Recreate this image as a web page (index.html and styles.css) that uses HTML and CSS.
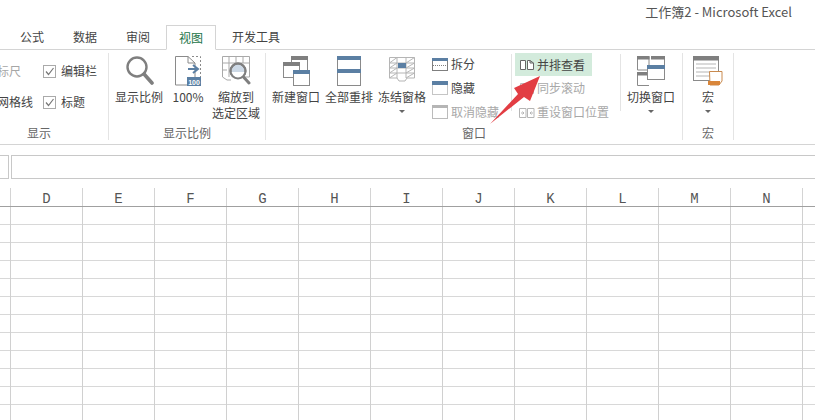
FILE: index.html
```html
<!DOCTYPE html>
<html lang="zh-CN">
<head>
  <meta charset="UTF-8" />
  <title>工作簿2 - Microsoft Excel</title>
  <link rel="stylesheet" href="styles.css">
</head>
<body>
  <div class="titlebar">工作簿2 - Microsoft Excel</div>

  <div class="tabs">
    <div class="tab">公式</div>
    <div class="tab">数据</div>
    <div class="tab">审阅</div>
    <div class="tab active">视图</div>
    <div class="tab">开发工具</div>
  </div>

  <div class="ribbon">
    <!-- 显示 -->
    <div class="group group-show">
      <div class="group-body checks">
        <div class="check-row muted">标尺</div>
        <div class="check-row"><span class="checkbox"><svg width="11" height="11" viewBox="0 0 11 11"><path d="M2 5.5 4.500 8.500 9.500 2" fill="none" stroke="#777" stroke-width="1.2"/></svg></span>编辑栏</div>
        <div class="check-row">网格线</div>
        <div class="check-row"><span class="checkbox"><svg width="11" height="11" viewBox="0 0 11 11"><path d="M2 5.5 4.500 8.500 9.500 2" fill="none" stroke="#777" stroke-width="1.2"/></svg></span>标题</div>
      </div>
      <div class="group-label">显示</div>
    </div>
    <div class="sep"></div>

    <!-- 显示比例 -->
    <div class="group group-zoom">
      <div class="group-body">
        <div class="big-btn">
          <svg class="big-icon" width="30" height="32" viewBox="0 0 30 32">
            <circle cx="13" cy="12" r="9.500" fill="#fff" stroke="#7f7f7f" stroke-width="2.400"/>
            <path d="M20 19 28 28" stroke="#7f7f7f" stroke-width="3.600" stroke-linecap="round"/>
          </svg>
          <span>显示比例</span>
        </div>
        <div class="big-btn btn-100">
          <svg class="big-icon" width="28" height="32" viewBox="0 0 28 32">
            <path d="M1.500 1.500H14L21 8V30H1.500Z" fill="#fff" stroke="#8a8a8a"/>
            <path d="M14 1.500V8H21" fill="none" stroke="#8a8a8a"/>
            <path d="M18 1.500H26.500V22" fill="none" stroke="#8a8a8a" stroke-dasharray="2 2"/>
            <path d="M14 14H23M19 10 24 14 19 18" fill="none" stroke="#5b7fa3" stroke-width="2"/>
            <rect x="13" y="22" width="14" height="9" fill="#5b7fa3"/>
            <text x="20" y="29.500" class="icon-text">100</text>
          </svg>
          <span>100%</span>
        </div>
        <div class="big-btn">
          <svg class="big-icon" width="30" height="32" viewBox="0 0 30 32">
            <path d="M1.500 1.500H28.500V22H24M1.500 1.500V22L6 25H10M1.500 8H28.500M8 1.500V22M15 1.500V8M22 1.500V8M1.500 15H6" fill="none" stroke="#a9a9a9"/>
            <circle cx="17" cy="16" r="7.500" fill="#cdd9e6" stroke="#7f7f7f" stroke-width="2"/>
            <path d="M10 17H24V19A7 7 0 0 1 10 19Z" fill="#fff"/>
            <circle cx="17" cy="16" r="7.500" fill="none" stroke="#7f7f7f" stroke-width="2"/>
            <path d="M22.500 22 28 28" stroke="#7f7f7f" stroke-width="3" stroke-linecap="round"/>
          </svg>
          <span>缩放到<br>选定区域</span>
        </div>
      </div>
      <div class="group-label">显示比例</div>
    </div>
    <div class="sep"></div>

    <!-- 窗口 -->
    <div class="group group-window">
      <div class="group-body">
        <div class="big-btn">
          <svg class="big-icon" width="28" height="32" viewBox="0 0 28 32">
            <rect x="9.500" y="1.500" width="16" height="15" fill="#fff" stroke="#8a8a8a"/>
            <rect x="9" y="1" width="17" height="4" fill="#7f7f7f"/>
            <rect x="1.500" y="7.500" width="16" height="15" fill="#fff" stroke="#8a8a8a"/>
            <rect x="1" y="7" width="17" height="4" fill="#7f7f7f"/>
            <rect x="11.500" y="15.500" width="16" height="15" fill="#fff" stroke="#8a8a8a"/>
            <rect x="11" y="15" width="17" height="4" fill="#5b7fa3"/>
          </svg>
          <span>新建窗口</span>
        </div>
        <div class="big-btn">
          <svg class="big-icon" width="26" height="32" viewBox="0 0 26 32">
            <rect x="1.500" y="1.500" width="23" height="29" fill="#fff" stroke="#8a8a8a"/>
            <rect x="1" y="1" width="24" height="4" fill="#5b7fa3"/>
            <rect x="1" y="14" width="24" height="4" fill="#5b7fa3"/>
          </svg>
          <span>全部重排</span>
        </div>
        <div class="big-btn">
          <svg class="big-icon" width="28" height="32" viewBox="0 0 28 32">
            <path d="M1.500 2.500H26.500V23H19L17 26H11L9 23H1.500ZM1.500 8H26.500M1.500 13H26.500M1.500 18H26.500M9 2.500V23M18 2.500V23M1.500 8 9 2.500M1.500 13 9 8M1.500 18 9 13M1.500 23 9 18M18 8 26.500 2.500M18 13 26.500 8M18 18 26.500 13M18 23 26.500 18" fill="#fff" stroke="#b5b5b5"/>
            <rect x="10" y="8" width="8" height="5" fill="#5b7fa3"/>
          </svg>
          <span>冻结窗格</span>
          <i class="caret"></i>
        </div>

        <div class="small-col">
          <div class="small-row">
            <svg width="16" height="13" viewBox="0 0 16 13"><rect x=".5" y=".5" width="15" height="12" fill="#fff" stroke="#7f7f7f"/><rect width="16" height="3" fill="#5b7fa3"/><path d="M1 7.500H15" stroke="#7f7f7f" stroke-dasharray="1 1"/></svg>
            <span>拆分</span>
          </div>
          <div class="small-row">
            <svg width="16" height="14" viewBox="0 0 16 14"><rect x=".5" y=".5" width="15" height="13" fill="#fff" stroke="#8a8a8a" stroke-dasharray="1 1"/><rect width="16" height="4" fill="#5b7fa3"/></svg>
            <span>隐藏</span>
          </div>
          <div class="small-row off">
            <svg width="16" height="14" viewBox="0 0 16 14"><rect x=".5" y=".5" width="15" height="13" fill="#fff" stroke="#bbb"/><rect width="16" height="3" fill="#b5b5b5"/></svg>
            <span>取消隐藏</span>
          </div>
        </div>
        <div class="sep inner"></div>

        <div class="small-col side">
          <div class="small-row on">
            <svg width="16" height="13" viewBox="0 0 16 13"><path d="M1.500 2.500H6.500V11.500H1.500ZM8.500 2.500H11L14.500 5V11.500H8.500ZM11 2.500V5H14.500" fill="#fff" stroke="#666"/></svg>
            <span>并排查看</span>
          </div>
          <div class="small-row off">
            <svg width="16" height="13" viewBox="0 0 16 13"><path d="M1.500 1.500H7V9.500H1.500ZM9 3.500H14.500V11.500H9Z" fill="#fff" stroke="#bbb"/></svg>
            <span>同步滚动</span>
          </div>
          <div class="small-row off">
            <svg width="16" height="13" viewBox="0 0 16 13"><path d="M.5 2.500H7V11.500H.5ZM8.500 2.500H15V11.500H8.500ZM2 7H5M3.500 5.500 5 7 3.500 8.500M14 7H11M12.500 5.500 11 7 12.500 8.500" fill="#fff" stroke="#b5b5b5"/></svg>
            <span>重设窗口位置</span>
          </div>
        </div>
        <div class="sep inner"></div>

        <div class="big-btn btn-switch">
          <svg class="big-icon" width="30" height="32" viewBox="0 0 30 32">
            <path d="M1.500 1.500H13V15H1.500ZM15.500 1.500H28.500V12M1.500 17.500H13M1.500 17.500V30.500H13" fill="#fff" stroke="#8a8a8a"/>
            <rect x="1" y="1" width="12.500" height="3.500" fill="#7f7f7f"/>
            <rect x="15" y="1" width="14" height="3.500" fill="#7f7f7f"/>
            <rect x="1" y="17" width="10" height="3.500" fill="#7f7f7f"/>
            <rect x="11.500" y="10.500" width="17" height="14" fill="#fff" stroke="#8a8a8a"/>
            <rect x="11" y="10" width="18" height="4" fill="#5b7fa3"/>
          </svg>
          <span>切换窗口</span>
          <i class="caret"></i>
        </div>
      </div>
      <div class="group-label">窗口</div>
    </div>
    <div class="sep"></div>

    <!-- 宏 -->
    <div class="group group-macro">
      <div class="group-body">
        <div class="big-btn">
          <svg class="big-icon" width="32" height="32" viewBox="0 0 32 32">
            <rect x="1.500" y="1.500" width="25" height="24" fill="#fff" stroke="#8a8a8a"/>
            <rect x="1" y="1" width="26" height="4.500" fill="#7f7f7f"/>
            <path d="M4 9H24M4 13H24M4 17H24M4 21H18" stroke="#b5b5b5"/>
            <path d="M17.500 16.500H30V26L27 30H18Z" fill="#fff" stroke="#c98a4e"/>
            <rect x="16" y="26" width="12" height="4" fill="#d9863a"/>
          </svg>
          <span>宏</span>
          <i class="caret"></i>
        </div>
      </div>
      <div class="group-label">宏</div>
    </div>
    <div class="sep"></div>
  </div>

  <div class="formula-bar">
    <div class="name-box"></div>
    <div class="formula-box"></div>
  </div>

  <div class="sheet">
    <div class="col-heads">
      <div class="corner"></div>
      <div class="col">D</div>
      <div class="col">E</div>
      <div class="col">F</div>
      <div class="col">G</div>
      <div class="col">H</div>
      <div class="col">I</div>
      <div class="col">J</div>
      <div class="col">K</div>
      <div class="col">L</div>
      <div class="col">M</div>
      <div class="col">N</div>
    </div>
    <div class="cells"></div>
  </div>

  <!-- red arrow pointing at 并排查看 -->
  <svg class="arrow" width="60" height="60" viewBox="0 0 60 60">
    <path d="M1 54 29 24 25 18 51 6 41 31 35 27Z" fill="#e23d43"/>
  </svg>
</body>
</html>
```

FILE: styles.css
```css
html, body {
  margin: 0;
  height: 100%;
  overflow: hidden;
}

body {
  position: relative;
  width: 815px;
  height: 420px;
  background-color: #fff;
  color: #444;
  font-family: "Noto Sans CJK SC", "Liberation Sans", sans-serif;
  font-size: 12px;
  line-height: 16px;
}

.titlebar {
  height: 25px;
  padding-right: 23px;
  text-align: right;
  line-height: 24px;
  font-size: 13px;
  color: #555;
  box-sizing: border-box;
}

.tabs {
  display: flex;
  gap: 3px;
  height: 24px;
  padding-left: 7px;
  border-bottom: 1px solid #d4d4d4;
}

.tab {
  height: 25px;
  padding: 0 13px;
  line-height: 24px;
  box-sizing: border-box;
}

.tab.active {
  border: 1px solid #d4d4d4;
  border-bottom: 1px solid #fff;
  padding: 0 12px;
  color: #217346;
}

.ribbon {
  display: flex;
  height: 94px;
  border-bottom: 1px solid #d4d4d4;
}

.sep {
  flex: none;
  width: 1px;
  margin: 3px 0 4px;
  background-color: #e4e4e4;
}

.sep.inner {
  margin: 4px 0 14px;
}

.group {
  flex: none;
  display: flex;
  flex-direction: column;
}

.group-show {
  width: 138px;
  margin-left: -30px;
}

.group-zoom { width: 156px; }
.group-window { width: 416px; }
.group-macro { width: 50px; }

.group-body {
  display: flex;
  height: 75px;
  box-sizing: border-box;
}

.group-label {
  text-align: center;
  color: #666;
}

.big-btn {
  display: flex;
  flex: none;
  flex-direction: column;
  align-items: center;
  width: 48px;
  padding-top: 5px;
  text-align: center;
  white-space: nowrap;
}

.big-icon {
  flex: none;
  margin-bottom: 2px;
}

.caret {
  width: 0;
  height: 0;
  margin-top: 5px;
  border: 3px solid transparent;
  border-top: 3px solid #666;
  border-bottom: 0;
}

/* 显示 */
.checks {
  display: grid;
  grid-template-columns: 46px auto;
  grid-auto-rows: 18px;
  row-gap: 13px;
  align-content: start;
  padding: 12px 0 0 27px;
}

.check-row {
  display: flex;
  align-items: center;
  white-space: nowrap;
}

.check-row.muted {
  color: #a6a6a6;
}

.checkbox {
  display: flex;
  align-items: center;
  justify-content: center;
  width: 11px;
  height: 11px;
  margin-right: 5px;
  border: 1px solid #aaa;
}

/* 显示比例 */
.group-zoom .group-body {
  gap: 7px;
  padding-left: 6px;
}

.btn-100 {
  width: 32px;
  margin: 0 1px 0 2px;
}

.icon-text {
  font-family: "Liberation Sans", sans-serif;
  font-size: 7px;
  font-weight: 700;
  fill: #fff;
  text-anchor: middle;
}

/* 窗口 */
.group-window .group-body {
  padding-left: 6px;
}

.group-window .big-btn + .big-btn {
  margin-left: 5px;
}

.small-col {
  display: flex;
  flex: none;
  flex-direction: column;
  width: 85px;
  padding: 2px 0 0 6px;
  box-sizing: border-box;
}

.small-col.side {
  width: 108px;
  padding-left: 3px;
}

.small-row {
  display: flex;
  align-items: center;
  gap: 3px;
  height: 24px;
  white-space: nowrap;
}

.small-row svg {
  flex: none;
}

.small-row.off {
  color: #a8a8a8;
}

.small-row.on {
  align-self: flex-start;
  height: 23px;
  margin-top: 1px;
  padding: 0 7px 0 4px;
  gap: 2px;
  background-color: #d3ebdc;
}

.side .small-row.off {
  padding-left: 4px;
  gap: 2px;
}

.btn-switch {
  margin-left: 6px;
}

/* 宏 */
.group-macro .big-btn {
  width: 50px;
}

/* 编辑栏 */
.formula-bar {
  display: flex;
  gap: 2px;
  height: 43px;
  padding-top: 10px;
  box-sizing: border-box;
}

.name-box {
  width: 8px;
  height: 22px;
  border: 1px solid #c8c8c8;
  border-left: 0;
}

.formula-box {
  flex: 1;
  height: 22px;
  margin-right: -2px;
  border: 1px solid #c8c8c8;
}

/* 表格 */
.col-heads {
  display: flex;
  height: 18px;
  border-bottom: 1px solid #a0a0a0;
}

.corner {
  flex: none;
  width: 10px;
  border-right: 1px solid #d4d4d4;
}

.col {
  flex: none;
  width: 71px;
  border-right: 1px solid #d4d4d4;
  text-align: center;
  line-height: 22px;
  font-family: "Liberation Mono", monospace;
  font-size: 14px;
  color: #555;
}

.cells {
  height: 214px;
  background-image:
    linear-gradient(to right, #d0d0d0 1px, transparent 1px),
    linear-gradient(to bottom, #d8d8d8 1px, transparent 1px);
  background-size: 72px 100%, 100% 18px;
  background-position: 10px 0, 0 17px;
}

.arrow {
  position: absolute;
  left: 489px;
  top: 70px;
}
```
